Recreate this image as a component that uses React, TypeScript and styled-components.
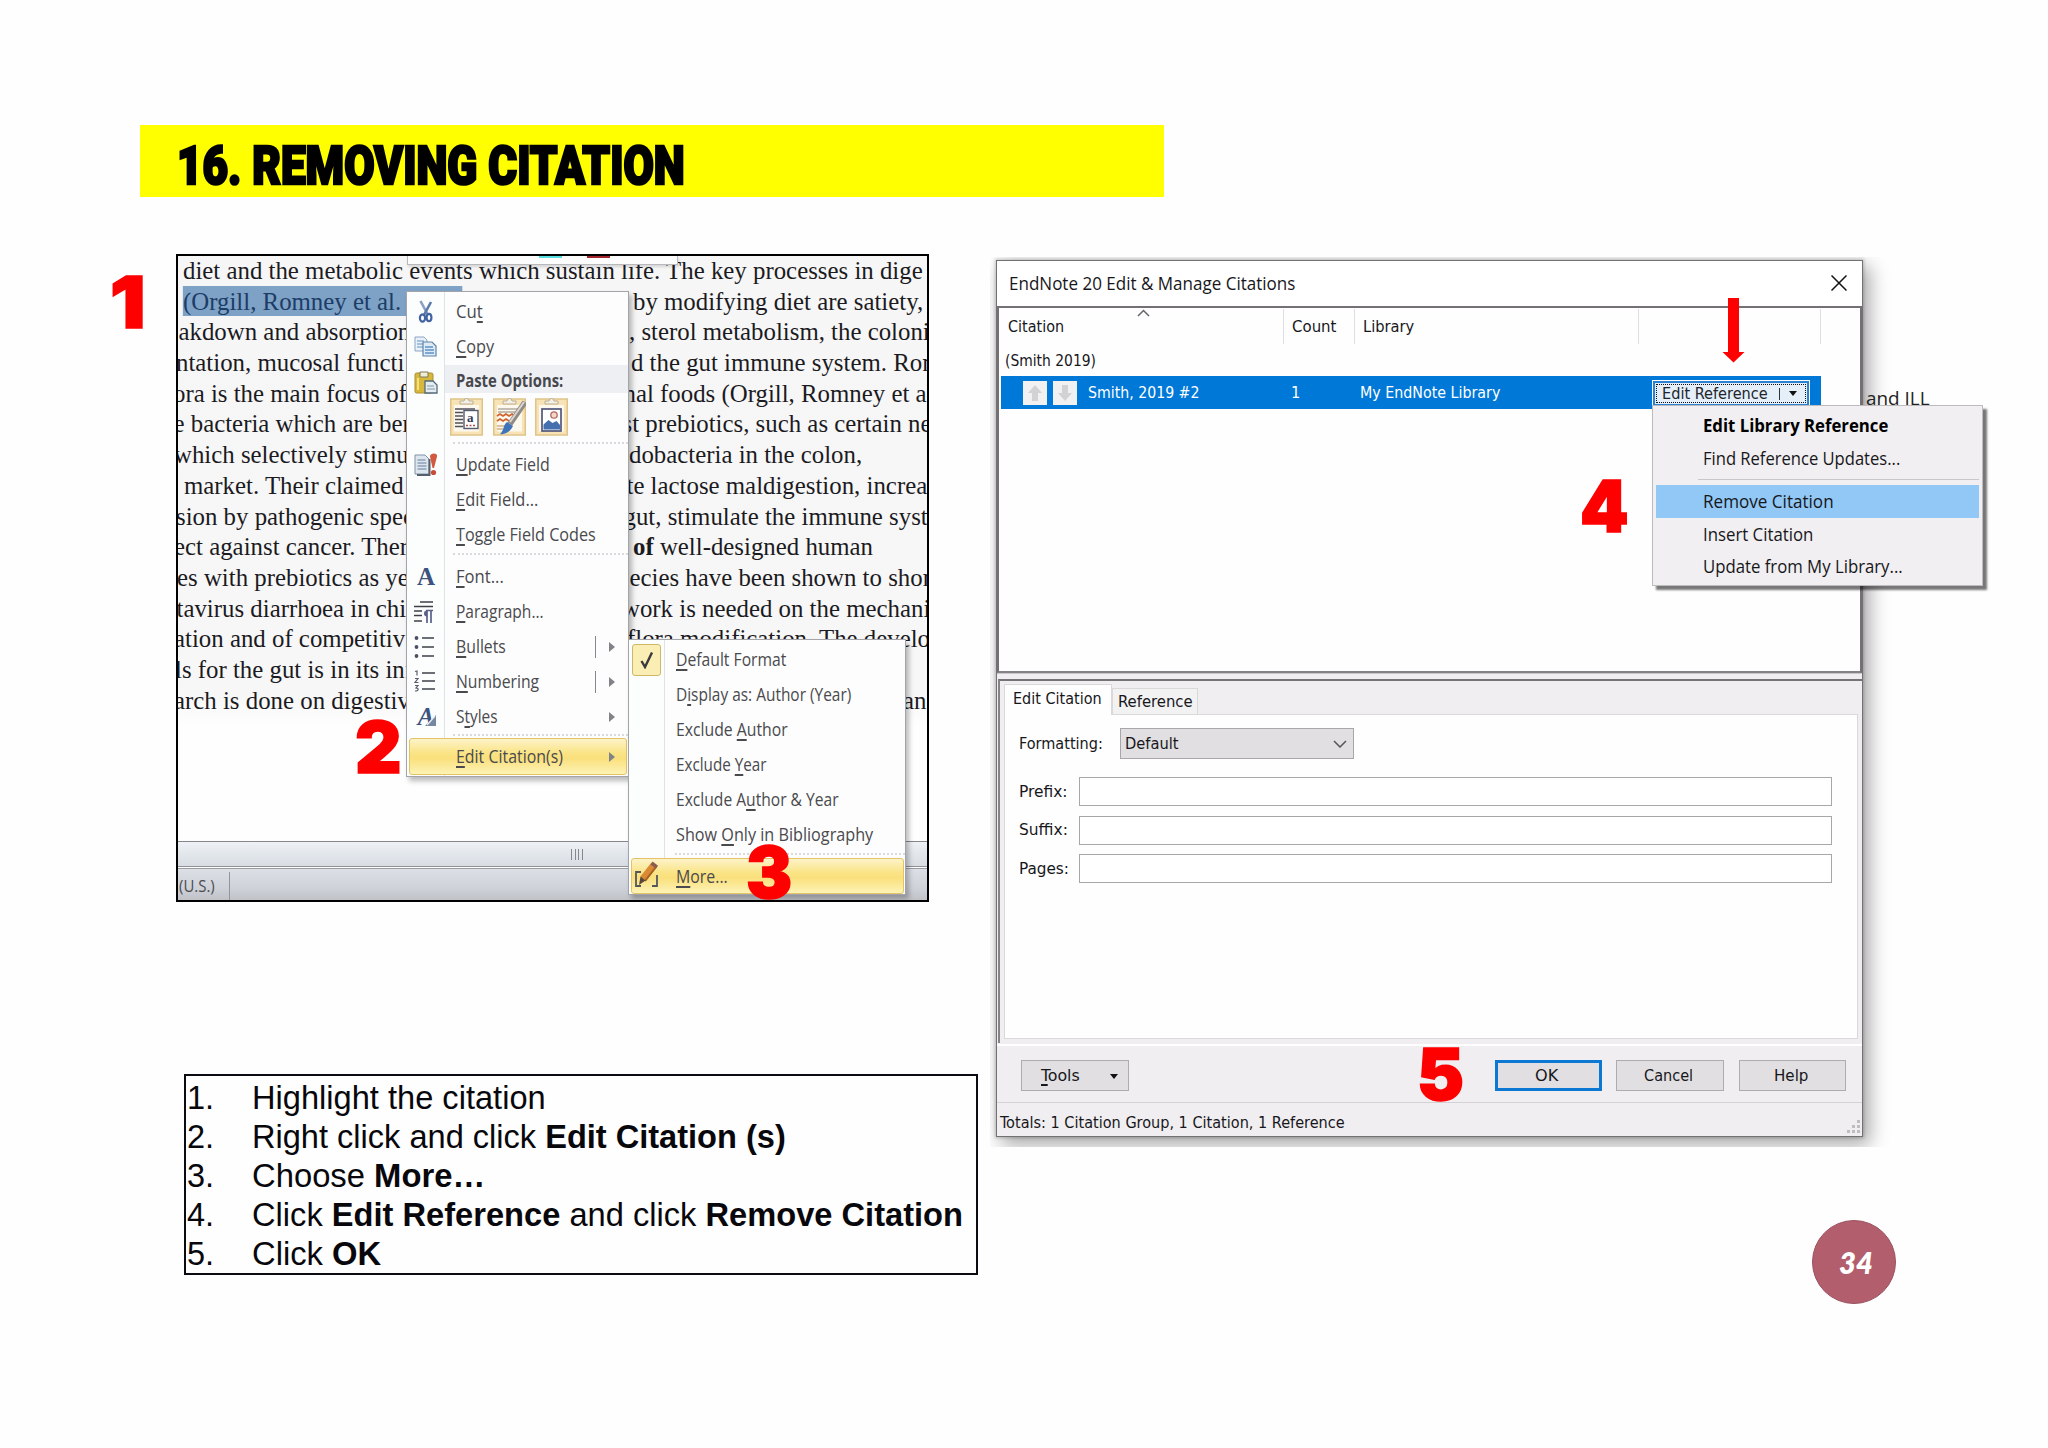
import React, { useLayoutEffect, useRef, useState } from "react";
import styled, { createGlobalStyle, css } from "styled-components";

const GlobalStyle = createGlobalStyle`
  *, *::before, *::after { box-sizing: border-box; }
  body { margin: 0; background: #fff; }
`;

const segoe = `"Open Sans", "Noto Sans", sans-serif`;
const tahoma = `"DejaVu Sans Condensed", "DejaVu Sans", sans-serif`;
const arial = `"Liberation Sans", Arial, sans-serif`;

/* ---------- text fitted to a fixed width ---------- */

const FitBox = styled.span<{ $w: number }>`
  display: inline-block;
  flex: none;
  width: ${(p) => p.$w}px;
  margin: 0 -1px;
  white-space: pre;
  text-align: left;
`;
const FitInner = styled.span`
  display: inline-block;
  transform-origin: 0 50%;
  u { text-decoration-thickness: 1.5px; text-underline-offset: 3px; text-decoration-skip-ink: none; }
`;

function Fit({ w, children }: { w: number; children: React.ReactNode }) {
  const ref = useRef<HTMLSpanElement>(null);
  const [scale, setScale] = useState(1);
  useLayoutEffect(() => {
    if (ref.current) setScale((w + 2) / ref.current.offsetWidth);
  }, [w]);
  return (
    <FitBox $w={w + 2}>
      <FitInner ref={ref} style={{ transform: `scaleX(${scale})` }}>{children}</FitInner>
    </FitBox>
  );
}

/* "~" marks the access key of a label */
function keyed(label: string) {
  const i = label.indexOf("~");
  if (i < 0) return label;
  return <>{label.slice(0, i)}<u>{label[i + 1]}</u>{label.slice(i + 2)}</>;
}

/* ---------- slide ---------- */

const Slide = styled.main`
  width: 2048px;
  height: 1448px;
  padding-top: 125px;
  overflow: hidden;
  background: #fefefe;
`;
const Banner = styled.h1`
  margin: 0 0 0 140px;
  width: 1024px;
  height: 72px;
  padding: 5px 0 0 38px;
  background: #ff0;
  color: #000;
  font: 900 53px/72px Roboto, sans-serif;
  -webkit-text-stroke: 2.6px #000;
`;
const Columns = styled.div`
  display: flex;
  gap: 12px;
  padding-left: 176px;
`;
const LeftColumn = styled.div`
  width: 802px;
  padding-top: 57px;
`;
const RightColumn = styled.div`
  padding-top: 60px;
`;
const Figure = styled.div`
  position: relative;
`;
const Marker = styled.span<{ $x: number; $y: number }>`
  position: absolute;
  z-index: 5;
  left: ${(p) => p.$x}px;
  top: ${(p) => p.$y}px;
  height: 54px;
  color: #f00;
  font: 900 72px/54px Inter, "DejaVu Sans", sans-serif;
  -webkit-text-stroke: 1.6px #f00;
`;

/* ---------- word processor capture ---------- */

const WordShot = styled.div`
  position: relative;
  display: flex;
  flex-direction: column;
  width: 753px;
  height: 648px;
  border: 2px solid #000;
  overflow: hidden;
  background: #fdfdfd;
`;
const Paper = styled.div`
  flex: 1;
  background: linear-gradient(#f7f6f6 0, #f8f7f7 440px, #fefefe 470px);
  overflow: hidden;
`;
const stretch = 0.967;
const Lines = styled.div`
  width: ${749 / stretch}px;
  transform: scaleX(${stretch});
  transform-origin: 0 0;
  color: #1b1b1f;
  font: 25.7px/30.7px "Liberation Serif", "Times New Roman", serif;
`;
const Line = styled.div`
  display: grid;
  grid-template-columns: ${440 / stretch}px 1fr;
  height: 30.7px;
  white-space: pre;
`;
const Segment = styled.span<{ $shift: number }>`
  margin-left: ${(p) => p.$shift / stretch}px;
`;
const Selection = styled.span`
  display: inline-block;
  width: ${279.5 / stretch}px;
  height: 30.7px;
  margin-top: -1px;
  padding-top: 1px;
  background: #7da2c6;
  color: #1d3c66;
`;
const MiniToolbar = styled.div`
  position: absolute;
  left: 229px;
  top: 0;
  width: 271px;
  height: 9px;
  display: flex;
  gap: 25px;
  padding-left: 131px;
  border: 1px solid #b9b9bd;
  border-top: 0;
  background: #fcfcfc;
  box-shadow: 1px 2px 3px #0002;
`;
const Swatch = styled.i<{ $c: string }>`
  width: 23px;
  height: 2px;
  background: ${(p) => p.$c};
`;
const ScrollTrack = styled.div`
  height: 26px;
  padding: 7px 0 0 393px;
  display: flex;
  gap: 2px;
  border-top: 1px solid #85878c;
  border-bottom: 1px solid #8f9197;
  background: linear-gradient(#eef1f5, #e0e5ea 60%, #d9dde3);
`;
const Grip = styled.i`
  width: 1px;
  height: 11px;
  margin-right: 0.5px;
  background: #85888e;
`;
const StatusBar = styled.div`
  height: 32px;
  margin-top: 1px;
  border-top: 1px solid #9b9da3;
  background: linear-gradient(#dcdfe5, #cfd2d9 60%, #c0c2c8);
  color: #4c4c50;
  font: 17px/33px ${segoe};
`;
const StatusCell = styled.div`
  width: 52px;
  height: 28px;
  margin-top: 3px;
  line-height: 28px;
  padding-left: 2px;
  border-right: 1px solid #93959a;
`;

/* ---------- Office style menus ---------- */

const Menu = styled.div<{ $x: number; $y: number; $w: number; $h: number; $gutter: number }>`
  position: absolute;
  left: ${(p) => p.$x}px;
  top: ${(p) => p.$y}px;
  width: ${(p) => p.$w}px;
  height: ${(p) => p.$h}px;
  display: flex;
  flex-direction: column;
  padding-top: 2px;
  border: 1px solid #a2a4aa;
  background: linear-gradient(90deg, #fcfdfd ${(p) => p.$gutter}px, #dfe2e6 ${(p) => p.$gutter}px, #dfe2e6 ${(p) => p.$gutter + 1}px, #fdfdfd ${(p) => p.$gutter + 1}px);
  box-shadow: 3px 4px 5px #0004;
  color: #4a4a4e;
  font: 18px/35px ${segoe};
`;
const Item = styled.div<{ $gutter: number; $h?: number; $hot?: boolean }>`
  display: grid;
  grid-template-columns: ${(p) => p.$gutter + 13}px 1fr auto;
  align-items: center;
  height: ${(p) => p.$h ?? 35}px;
  line-height: ${(p) => p.$h ?? 35}px;
  flex: none;
  ${(p) =>
    p.$hot &&
    css`
      margin: 0 1px 0 2px;
      border: 1px solid #e3c365;
      border-radius: 3px;
      grid-template-columns: ${p.$gutter + 10}px 1fr auto;
      background: linear-gradient(#fdf3c8, #fae486 40%, #fae07c 55%, #fdf3b6);
      line-height: ${(p.$h ?? 35) - 2}px;
    `}
`;
const IconCell = styled.span<{ $pad?: number }>`
  display: flex;
  justify-content: flex-start;
  padding-left: ${(p) => p.$pad ?? 7}px;
  svg { display: block; overflow: visible; }
`;
const MenuHeading = styled.div`
  margin: 1px 0 0 38px;
  height: 28px;
  padding-left: 12px;
  background: #eeeff3;
  font-weight: 700;
  line-height: 30px;
  color: #47484d;
`;
const HeadingRow = styled.div`
  position: relative;
  svg { position: absolute; left: 7px; top: 6px; }
`;
const PasteRow = styled.div`
  display: flex;
  gap: 9.5px;
  height: 49px;
  padding: 4px 0 0 43px;
`;
const Rule = styled.div<{ $left: number; $top: number; $h: number }>`
  height: ${(p) => p.$h}px;
  padding: ${(p) => p.$top}px 0 0 ${(p) => p.$left}px;
  &::before { content: ""; display: block; border-top: 2px dotted #d9dadd; }
`;
const Trail = styled.span<{ $split?: boolean; $pad?: number }>`
  display: flex;
  align-items: center;
  justify-content: flex-end;
  width: 33px;
  height: 22px;
  padding-right: ${(p) => p.$pad ?? 13}px;
  border-left: ${(p) => (p.$split ? "1.5px solid #85878d" : "0")};
`;
const Arrow = () => (
  <svg width="6" height="10" viewBox="0 0 6 10"><path d="M0 0 6 5 0 10z" fill="#828388" /></svg>
);
const CheckTile = styled.span`
  display: flex;
  align-items: center;
  justify-content: center;
  width: 29px;
  height: 32px;
  margin-left: 3px;
  border: 1.5px solid #cfb768;
  border-radius: 3px;
  background: #fbeeb4;
`;

/* ---------- menu icons ---------- */

const CutIcon = () => (
  <svg width="24" height="24" viewBox="0 0 24 24" fill="none">
    <path d="M6.500 1 14 15" stroke="#8ba0bf" strokeWidth="2.600" />
    <path d="M17 2 10 15" stroke="#5b7bac" strokeWidth="2.600" />
    <ellipse cx="8.500" cy="18" rx="2.600" ry="3.600" stroke="#43659f" strokeWidth="2.200" />
    <ellipse cx="15" cy="17.500" rx="2.400" ry="3.600" stroke="#43659f" strokeWidth="2.200" />
  </svg>
);
const CopyIcon = () => (
  <svg width="24" height="24" viewBox="0 0 24 24">
    <path d="M1 2h9l3 3v11H1z" fill="#e8f0f8" stroke="#8ba6c2" />
    <path d="M3 6h7M3 9h8M3 12h8" stroke="#8fb2d2" strokeWidth="1.400" />
    <path d="M9 7h9l4 4v10H9z" fill="#dfeaf5" stroke="#5f83a8" strokeWidth="1.200" />
    <path d="M11 12h8M11 15h9M11 18h9" stroke="#5e93c6" strokeWidth="1.500" />
  </svg>
);
const PasteIcon = () => (
  <svg width="25" height="25" viewBox="0 0 25 25">
    <rect x="1" y="3" width="18" height="20" rx="1.500" fill="#d8b83c" stroke="#a98d32" />
    <path d="M6 2h8v5H6z" fill="#f1edd2" stroke="#7d7b58" />
    <path d="M4 8v12" stroke="#f3e27a" strokeWidth="2" />
    <path d="M11 11h8l4 4v8H11z" fill="#e6edf2" stroke="#536b78" strokeWidth="1.300" />
    <path d="M13 16h7M13 19h8" stroke="#7e98a8" />
  </svg>
);
const UpdateIcon = () => (
  <svg width="25" height="24" viewBox="0 0 25 24">
    <path d="M1 2h10l4 4v15H1z" fill="#dde6ee" stroke="#8293a5" />
    <path d="M15.500 6v16H3" stroke="#56616d" strokeWidth="2" fill="none" />
    <path d="M3.500 7h8M3.500 10h9M3.500 13h9M3.500 16h9" stroke="#8aa0b4" strokeWidth="1.300" />
    <path d="M16 3.500c0-4 8-4 7 0l-3 11.500h-1.500z" fill="#d2583f" />
    <circle cx="19.500" cy="19.500" r="2.600" fill="#c84c39" />
  </svg>
);
const LetterGlyph = styled.span<{ $italic?: boolean }>`
  width: 24px;
  text-align: center;
  color: #3c5380;
  font: 700 25px/26px "Liberation Serif", serif;
  font-style: ${(p) => (p.$italic ? "italic" : "normal")};
`;
const StyleGlyph = styled.span`
  position: relative;
  display: flex;
  svg { position: absolute; left: 9px; top: 11px; }
`;
const ParagraphIcon = () => (
  <svg width="22" height="22" viewBox="0 0 22 22" fill="none" stroke="#3d4048" strokeWidth="1.700">
    <path d="M6 1h13M0 5.500h19M0 10h8M0 14.500h8M0 20h8" />
    <path d="M13 10v12M17 10v12M19 9.500h-7" stroke="#59608a" />
    <path d="M13 9.500a3 3 0 0 0 0 6z" fill="#59608a" stroke="none" />
  </svg>
);
const BulletsIcon = () => (
  <svg width="22" height="22" viewBox="0 0 22 22">
    <path d="M8 2h12M8 11h12M8 20h12" stroke="#3d4048" strokeWidth="1.600" />
    <g fill="#4a4f63"><circle cx="2.500" cy="2" r="1.900" /><circle cx="2.500" cy="11" r="1.900" /><circle cx="2.500" cy="20" r="1.900" /></g>
  </svg>
);
const NumberingIcon = () => (
  <svg width="22" height="22" viewBox="0 0 22 22" fill="none" stroke="#3d4048" strokeWidth="1.600">
    <path d="M8 2h13M8 10h13M8 18h13" />
    <path d="M1 0.500 3 0v4.500M1 7.500h3l-3 4h3.500M1 14.500h3l-2 2.500c3 0 3 3-1 3" strokeWidth="1.200" stroke="#5a5f70" />
  </svg>
);
const Board = ({ kind }: { kind: "text" | "merge" | "picture" }) => (
  <svg width="33" height="39" viewBox="0 0 33 39">
    <rect x="0.750" y="2" width="31.500" height="36" fill="#f7e3b6" stroke="#dfc389" strokeWidth="1.500" />
    <rect x="4" y="8" width="25" height="26.500" fill="#fcf8ee" />
    <path d="M10 7V4h4a2.500 2.500 0 0 1 5 0h4v3z" fill="#f2efe6" stroke="#bcae8e" />
    {kind === "text" && (
      <>
        <path d="M5 12h20M5 15.500h8M5 19h8M5 22.500h8M5 26h8M5 29.500h8" stroke="#51525c" strokeWidth="1.300" />
        <rect x="14" y="13.500" width="14" height="18" fill="#fff" stroke="#565a70" strokeWidth="1.400" />
        <text x="17" y="25" fontFamily="Liberation Serif" fontWeight="700" fontSize="13" fill="#333a56">a</text>
        <path d="M16 28.500h10" stroke="#a65352" strokeDasharray="2 1.500" strokeWidth="1.500" />
      </>
    )}
    {kind === "merge" && (
      <>
        <path d="M5 12h20M5 15h18" stroke="#8a8177" strokeWidth="1.200" />
        <path d="m4 19 3-2 3 2 3-2 3 2 3-2 3 2M4 24l3-2 3 2 3-2 3 2" stroke="#d0622c" strokeWidth="1.800" fill="none" />
        <path d="M4 29h10M4 32h6" stroke="#b98c5c" strokeWidth="1.200" />
        <path d="M32 5 17 27" stroke="#8f8a86" strokeWidth="5.500" />
        <path d="M31 5 17 25" stroke="#d9d6d2" strokeWidth="2" />
        <path d="m14 25 6 4c-3 6-8 9-13 8 4-3 3-9 7-12z" fill="#3f74b8" />
      </>
    )}
    {kind === "picture" && (
      <>
        <rect x="7" y="12" width="19" height="22" fill="#fff" stroke="#51577a" strokeWidth="1.700" />
        <path d="m8.500 32.500 0-5 5-4.500 4 3 4-2 3.500 4v4.500z" fill="#456fae" />
        <circle cx="19" cy="18" r="3.200" fill="#f6d6c8" stroke="#b06a62" strokeWidth="1.300" />
      </>
    )}
  </svg>
);
const PencilIcon = () => (
  <svg width="27" height="28" viewBox="0 0 27 28" fill="none">
    <path d="M7 10H2v14h5M18 24h5V13" stroke="#54585c" strokeWidth="1.800" />
    <path d="M20 3 9 17" stroke="#d98a34" strokeWidth="7" />
    <path d="m22 5-11 14" stroke="#a85f22" strokeWidth="2" />
    <path d="m17.500 1 5.500 4.200" stroke="#8d5a52" strokeWidth="3.500" />
    <path d="m6.500 14.500 5 4L5 23z" fill="#55473b" />
  </svg>
);
const CheckIcon = () => (
  <svg width="14" height="18" viewBox="0 0 14 18"><path d="m1.500 10 3.500 6L12 1.500" fill="none" stroke="#3b3a3c" strokeWidth="2.400" /></svg>
);

/* ---------- instructions ---------- */

const Steps = styled.ol`
  list-style: none;
  margin: 172px 0 0 8px;
  width: 794px;
  height: 201px;
  padding: 3px 0 0 1px;
  border: 2px solid #0b0b12;
  color: #08080c;
  font: 32.5px/39px ${arial};
`;
const Step = styled.li`
  display: grid;
  grid-template-columns: 65.5px 1fr;
  height: 39px;
`;

/* ---------- EndNote dialog ---------- */

const Capture = styled.div`
  position: relative;
  width: 1010px;
  height: 890px;
  padding: 3px 0 0 6px;
  overflow: hidden;
`;
const Dialog = styled.section`
  display: flex;
  flex-direction: column;
  width: 867px;
  height: 877px;
  border: 1px solid #737174;
  background: #f0eef0;
  box-shadow: 6px 7px 18px 1px #0005, 0 0 3px 1px #0003;
  color: #17171b;
  font: 16.3px/20px ${tahoma};
`;
const TitleBar = styled.header`
  display: flex;
  align-items: center;
  justify-content: space-between;
  height: 45px;
  padding: 0 15px 1px 13px;
  background: #fff;
  font: 17.5px/44px ${segoe};
`;
const List = styled.div`
  height: 367px;
  border: 2px solid #737174;
  border-bottom-color: #848286;
  background: #fefefe;
`;
const HeadRow = styled.div`
  display: grid;
  grid-template-columns: 285px 71px 284px 182px;
  height: 37px;
  padding-top: 1px;
`;
const HeadCell = styled.div<{ $pad: number }>`
  position: relative;
  height: 35px;
  padding-left: ${(p) => p.$pad}px;
  line-height: 35px;
  border-right: 1.5px solid #dedde0;
  svg { position: absolute; left: 138px; top: 0; }
`;
const GroupRow = styled.div`
  height: 31px;
  padding-left: 7px;
  line-height: 32px;
`;
const SelectedRow = styled.div`
  display: grid;
  grid-template-columns: 88px 203px 69px 291px 158px;
  align-items: center;
  width: 820px;
  height: 33px;
  margin-left: 2px;
  background: #0078d7;
  color: #fff;
  line-height: 34px;
`;
const MoveButtons = styled.div`
  display: flex;
  gap: 6px;
  padding-left: 22px;
`;
const MoveButton = styled.button`
  width: 24px;
  height: 24px;
  padding: 0;
  border: 0;
  background: #f1f1f2;
  svg { display: block; margin: auto; }
`;
const EditButton = styled.button`
  width: 158px;
  height: 27px;
  margin-top: 1px;
  padding: 2px;
  border: 1px solid #fff;
  outline: 0;
  background: #e4effa;
  box-shadow: inset 0 0 0 2px #2a82d2;
  font: inherit;
  color: #22242a;
`;
const FocusRect = styled.span`
  display: flex;
  align-items: center;
  width: 150px;
  height: 19px;
  margin: 1px;
  padding-left: 6px;
  border: 1.5px dotted #111;
  line-height: 18px;
`;
const Divider = styled.i`
  width: 1px;
  height: 12px;
  margin: 0 9px 0 12px;
  background: #333;
`;
const Splitter = styled.div`
  height: 6px;
  border-top: 1px solid #c9c7ca;
`;
const TabPanel = styled.div`
  height: 364px;
  margin-left: 1px;
  padding: 3px 4px 0 4px;
  border-top: 2px solid #757376;
  border-left: 2px solid #858386;
`;
const Tabs = styled.div`
  display: flex;
  align-items: flex-end;
  height: 30px;
`;
const Tab = styled.div<{ $active?: boolean; $w: number }>`
  position: relative;
  width: ${(p) => p.$w}px;
  height: ${(p) => (p.$active ? 31 : 26)}px;
  margin-bottom: ${(p) => (p.$active ? -1 : 0)}px;
  padding-left: ${(p) => (p.$active ? 9 : 6)}px;
  line-height: ${(p) => (p.$active ? 27 : 26)}px;
  border: 1.5px solid #dad8db;
  border-bottom: 0;
  background: ${(p) => (p.$active ? "#fefefe" : "#f3f2f3")};
`;
const Pane = styled.div`
  height: 325px;
  padding: 13px 0 0 15px;
  border: 1.5px solid #dad8db;
  background: #fefefe;
`;
const Field = styled.div<{ $label: number; $gap: number }>`
  display: grid;
  grid-template-columns: ${(p) => p.$label}px auto;
  align-items: center;
  justify-content: start;
  margin-bottom: ${(p) => p.$gap}px;
`;
const Select = styled.div`
  display: flex;
  align-items: center;
  justify-content: space-between;
  width: 234px;
  height: 31px;
  padding: 1px 6px 0 5px;
  border: 1.5px solid #a8a6a9;
  background: #e1dfe1;
`;
const Input = styled.div`
  width: 753px;
  height: 29px;
  border: 1.5px solid #a8a6a9;
  background: #fff;
`;
const Footer = styled.footer`
  display: flex;
  height: 59px;
  margin-top: 1px;
  padding: 14px 0 0 24px;
  border-top: 2px solid #fff;
  border-bottom: 1px solid #d4d2d5;
`;
const Button = styled.button<{ $primary?: boolean; $ml?: number }>`
  display: flex;
  align-items: center;
  justify-content: center;
  width: 107.5px;
  height: 31px;
  margin: 0 0 0 ${(p) => p.$ml ?? 0}px;
  padding: 1px 3px 0 0;
  border: ${(p) => (p.$primary ? "3px solid #0c78d2" : "1.5px solid #aeacaf")};
  background: #e1dfe1;
  color: inherit;
  font: inherit;
`;
const SplitButton = styled(Button)`
  justify-content: space-between;
  padding: 1px 10px 0 20px;
`;
const Totals = styled.div`
  display: flex;
  flex: 1;
  justify-content: space-between;
  padding: 7px 1px 0 4px;
  line-height: 26px;
`;
const GripCorner = styled.svg`
  margin-top: 10px;
`;
const Behind = styled.span`
  position: absolute;
  left: 877px;
  top: 128px;
  color: #222;
  font: 18px/26px ${segoe};
`;
const PopupMenu = styled.div`
  position: absolute;
  left: 662px;
  top: 148px;
  width: 331px;
  height: 181px;
  padding: 3px 3px 0 3px;
  border: 1.5px solid #bdbbbe;
  background: #f1eff1;
  box-shadow: 4px 4px 2px #0008;
  color: #17171b;
  font: 18px/32px ${segoe};
`;
const PopupItem = styled.div<{ $hot?: boolean; $bold?: boolean }>`
  height: 32.5px;
  padding-left: 48px;
  background: ${(p) => (p.$hot ? "#91c8f5" : "transparent")};
  font-weight: ${(p) => (p.$bold ? 700 : 400)};
  color: ${(p) => (p.$bold ? "#000" : "inherit")};
`;
const PopupRule = styled.div`
  height: 11px;
  margin-left: 42px;
  padding-top: 5px;
  &::before { content: ""; display: block; border-top: 1px solid #c9c7ca; }
`;
const ArrowPointer = styled.svg`
  position: absolute;
  left: 732px;
  top: 41px;
`;
const Caret = () => (
  <svg width="8" height="5" viewBox="0 0 8 5"><path d="M0 0h8L4 5z" fill="#111" /></svg>
);
const PageBadge = styled.div`
  display: flex;
  align-items: center;
  justify-content: center;
  width: 84px;
  height: 84px;
  margin: 73px 0 0 822px;
  padding-left: 4px;
  border-radius: 50%;
  border: 1px solid #9b5260;
  background: #b35e6c;
  color: #fff;
  font: italic 800 30px/84px Lato, sans-serif;
`;

/* ---------- content ---------- */

type TextLine = { l?: string; lx?: number; r?: React.ReactNode; rx?: number };
const text: TextLine[] = [
  { l: "diet and the metabolic events which sustain life. The key processes in dige", lx: 5 },
  { r: "by modifying diet are satiety,", rx: 633 },
  { l: "akdown and absorption", lx: 0.5, r: ", sterol metabolism, the coloni", rx: 629 },
  { l: "ntation, mucosal functi", lx: -2, r: "d the gut immune system. Rom", rx: 631 },
  { l: "ora is the main focus of", lx: -5, r: "nal foods (Orgill, Romney et al", rx: 623.5 },
  { l: "e bacteria which are ben", lx: -4.5, r: "st prebiotics, such as certain ne", rx: 622.5 },
  { l: "which selectively stimul", lx: -4, r: "dobacteria in the colon,", rx: 629 },
  { l: "market. Their claimed", lx: 6, r: "te lactose maldigestion, increa", rx: 626.5 },
  { l: "sion by pathogenic spec", lx: -2, r: "gut, stimulate the immune syst", rx: 623.5 },
  { l: "ect against cancer. Ther", lx: -4, r: <><b>of</b> well-designed human</>, rx: 633 },
  { l: "es with prebiotics as ye", lx: -1, r: "ecies have been shown to shor", rx: 629.5 },
  { l: "tavirus diarrhoea in chi", lx: -1.5, r: "work is needed on the mechani", rx: 622 },
  { l: "ation and of competitiv", lx: -4, r: "flora modification. The develo", rx: 627 },
  { l: "ls for the gut is in its inf", lx: -3 },
  { l: "arch is done on digestiv", lx: -4, r: "an", rx: 903 },
];

type Entry = { label: string; w: number; icon?: React.ReactNode; trail?: "arrow" | "split" };
const clipboardItems: Entry[] = [
  { label: "Cu~t", w: 25, icon: <CutIcon /> },
  { label: "~Copy", w: 36, icon: <CopyIcon /> },
];
const fieldItems: Entry[] = [
  { label: "~Update Field", w: 92, icon: <UpdateIcon /> },
  { label: "~Edit Field...", w: 80 },
  { label: "~Toggle Field Codes", w: 138 },
];
const formatItems: Entry[] = [
  { label: "~Font...", w: 46, icon: <LetterGlyph>A</LetterGlyph> },
  { label: "~Paragraph...", w: 86, icon: <ParagraphIcon /> },
  { label: "~Bullets", w: 48, icon: <BulletsIcon />, trail: "split" },
  { label: "~Numbering", w: 81, icon: <NumberingIcon />, trail: "split" },
  {
    label: "S~tyles", w: 40, trail: "arrow",
    icon: (
      <StyleGlyph>
        <LetterGlyph $italic>A</LetterGlyph>
        <svg width="14" height="12" viewBox="0 0 14 12"><path d="M13 0v11H2z" fill="#75889f" /><path d="m12 1-8 9" stroke="#e4ebf2" strokeWidth="1.500" /></svg>
      </StyleGlyph>
    ),
  },
];
const citationItems: Entry[] = [
  { label: "~Default Format", w: 108, icon: "check" },
  { label: "D~isplay as: Author (Year)", w: 173 },
  { label: "Exclude ~Author", w: 110 },
  { label: "Exclude ~Year", w: 88.5 },
  { label: "Exclude A~uthor & Year", w: 161 },
  { label: "Show ~Only in Bibliography", w: 195 },
];

function MenuItem({ e, gutter }: { e: Entry; gutter: number }) {
  return (
    <Item $gutter={gutter}>
      {e.icon === "check" ? <CheckTile><CheckIcon /></CheckTile> : <IconCell>{e.icon}</IconCell>}
      <Fit w={e.w}>{keyed(e.label)}</Fit>
      {e.trail ? <Trail $split={e.trail === "split"}><Arrow /></Trail> : <span />}
    </Item>
  );
}

function WordFigure() {
  return (
    <Figure>
      <WordShot>
        <Paper>
          <Lines>
            {text.map((t, i) => (
              <Line key={i}>
                {i === 1 ? (
                  <Segment $shift={5}><Selection>(Orgill, Romney et al. 2004)</Selection></Segment>
                ) : (
                  <Segment $shift={t.lx ?? 0}>{t.l}</Segment>
                )}
                {t.r && <Segment $shift={(t.rx ?? 0) - 178 - 440}>{t.r}</Segment>}
              </Line>
            ))}
          </Lines>
        </Paper>
        <ScrollTrack><Grip /><Grip /><Grip /><Grip /></ScrollTrack>
        <StatusBar><StatusCell><Fit w={34}>(U.S.)</Fit></StatusCell></StatusBar>
        <MiniToolbar><Swatch $c="#58dfe0" /><Swatch $c="#a3242b" /></MiniToolbar>

        <Menu $x={228} $y={35} $w={223} $h={486} $gutter={37}>
          {clipboardItems.map((e) => <MenuItem key={e.label} e={e} gutter={37} />)}
          <HeadingRow>
            <PasteIcon />
            <MenuHeading><Fit w={105}>Paste Options:</Fit></MenuHeading>
          </HeadingRow>
          <PasteRow>
            <Board kind="text" /><Board kind="merge" /><Board kind="picture" />
          </PasteRow>
          <Rule $left={46} $top={0} $h={5} />
          {fieldItems.map((e) => <MenuItem key={e.label} e={e} gutter={37} />)}
          <Rule $left={46} $top={1} $h={7} />
          {formatItems.map((e) => <MenuItem key={e.label} e={e} gutter={37} />)}
          <Rule $left={46} $top={0} $h={4} />
          <Item $gutter={37} $h={37} $hot>
            <span />
            <Fit w={105}>{keyed("~Edit Citation(s)")}</Fit>
            <Trail $pad={11}><Arrow /></Trail>
          </Item>
        </Menu>

        <Menu $x={450} $y={383} $w={278} $h={256} $gutter={35}>
          {citationItems.map((e) => <MenuItem key={e.label} e={e} gutter={35} />)}
          <Rule $left={46} $top={1} $h={6} />
          <Item $gutter={35} $h={36} $hot>
            <IconCell $pad={2}><PencilIcon /></IconCell>
            <Fit w={50}>{keyed("~More...")}</Fit>
          </Item>
        </Menu>
      </WordShot>
      <Marker $x={-65} $y={21}><Fit w={34}>1</Fit></Marker>
      <Marker $x={180} $y={466}><Fit w={45}>2</Fit></Marker>
      <Marker $x={571} $y={591}><Fit w={44}>3</Fit></Marker>
    </Figure>
  );
}

function EndNoteFigure() {
  return (
    <Capture>
      <Behind><Fit w={62}>and ILL</Fit></Behind>
      <Dialog>
        <TitleBar>
          <Fit w={284}>EndNote 20 Edit & Manage Citations</Fit>
          <svg width="16" height="16" viewBox="0 0 16 16"><path d="m.5.5 15 15m0-15-15 15" stroke="#111" strokeWidth="1.500" /></svg>
        </TitleBar>
        <List>
          <HeadRow>
            <HeadCell $pad={10}>
              <Fit w={54}>Citation</Fit>
              <svg width="13" height="8" viewBox="0 0 13 8"><path d="m1 7 5.500-5.500L12 7" fill="none" stroke="#66656a" strokeWidth="1.500" /></svg>
            </HeadCell>
            <HeadCell $pad={9}><Fit w={43}>Count</Fit></HeadCell>
            <HeadCell $pad={9}><Fit w={49}>Library</Fit></HeadCell>
            <HeadCell $pad={0} />
          </HeadRow>
          <GroupRow><Fit w={89}>(Smith 2019)</Fit></GroupRow>
          <SelectedRow>
            <MoveButtons>
              <MoveButton><svg width="16" height="16" viewBox="0 0 16 16"><path d="M8 0 15 8h-4v8H5V8H1z" fill="#d2d2d4" /></svg></MoveButton>
              <MoveButton><svg width="16" height="16" viewBox="0 0 16 16"><path d="M8 16 15 8h-4V0H5v8H1z" fill="#d2d2d4" /></svg></MoveButton>
            </MoveButtons>
            <Fit w={109}>Smith, 2019 #2</Fit>
            <Fit w={7}>1</Fit>
            <Fit w={138}>My EndNote Library</Fit>
            <EditButton>
              <FocusRect><Fit w={104}>Edit Reference</Fit><Divider /><Caret /></FocusRect>
            </EditButton>
          </SelectedRow>
        </List>
        <Splitter />
        <TabPanel>
          <Tabs>
            <Tab $active $w={108}><Fit w={86.5}>Edit Citation</Fit></Tab>
            <Tab $w={86}><Fit w={73}>Reference</Fit></Tab>
          </Tabs>
          <Pane>
            <Field $label={100} $gap={18}>
              <Fit w={82}>Formatting:</Fit>
              <Select>
                <Fit w={52}>Default</Fit>
                <svg width="14" height="8" viewBox="0 0 14 8"><path d="m1 1 6 6 6-6" fill="none" stroke="#555458" strokeWidth="1.500" /></svg>
              </Select>
            </Field>
            <Field $label={59} $gap={9.5}><Fit w={46.5}>Prefix:</Fit><Input /></Field>
            <Field $label={59} $gap={9.5}><Fit w={46.5}>Suffix:</Fit><Input /></Field>
            <Field $label={59} $gap={0}><Fit w={48}>Pages:</Fit><Input /></Field>
          </Pane>
        </TabPanel>
        <Footer>
          <SplitButton><Fit w={37}>{keyed("~Tools")}</Fit><Caret /></SplitButton>
          <Button $primary $ml={366}><Fit w={21}>OK</Fit></Button>
          <Button $ml={14}><Fit w={47.5}>Cancel</Fit></Button>
          <Button $ml={15}><Fit w={32}>Help</Fit></Button>
        </Footer>
        <Totals>
          <Fit w={343}>Totals: 1 Citation Group, 1 Citation, 1 Reference</Fit>
          <GripCorner width="14" height="14" viewBox="0 0 14 14">
            <path d="M10 0h3v3h-3zM5 5h3v3H5zM10 5h3v3h-3zM0 10h3v3H0zM5 10h3v3H5zM10 10h3v3h-3z" fill="#bfbdc0" />
          </GripCorner>
        </Totals>
      </Dialog>
      <PopupMenu>
        <PopupItem $bold><Fit w={183}>Edit Library Reference</Fit></PopupItem>
        <PopupItem><Fit w={195}>Find Reference Updates...</Fit></PopupItem>
        <PopupRule />
        <PopupItem $hot><Fit w={129}>Remove Citation</Fit></PopupItem>
        <PopupItem><Fit w={108}>Insert Citation</Fit></PopupItem>
        <PopupItem><Fit w={198}>Update from My Library...</Fit></PopupItem>
      </PopupMenu>
      <ArrowPointer width="24" height="65" viewBox="0 0 24 65">
        <path d="M6 0h11v54h5.500L11.500 64.500 0.500 54H6z" fill="#f00" />
      </ArrowPointer>
      <Marker $x={591} $y={222}><Fit w={47}>4</Fit></Marker>
      <Marker $x={428} $y={790}><Fit w={45}>5</Fit></Marker>
    </Capture>
  );
}

export default function App() {
  return (
    <>
      <GlobalStyle />
      <Slide>
        <Banner><Fit w={506}>16. REMOVING CITATION</Fit></Banner>
        <Columns>
          <LeftColumn>
            <WordFigure />
            <Steps>
              <Step><span>1.</span><Fit w={292}>Highlight the citation</Fit></Step>
              <Step><span>2.</span><Fit w={532}>Right click and click <b>Edit Citation (s)</b></Fit></Step>
              <Step><span>3.</span><Fit w={231}>Choose <b>More…</b></Fit></Step>
              <Step><span>4.</span><Fit w={709}>Click <b>Edit Reference</b> and click <b>Remove Citation</b></Fit></Step>
              <Step><span>5.</span><Fit w={127}>Click <b>OK</b></Fit></Step>
            </Steps>
          </LeftColumn>
          <RightColumn>
            <EndNoteFigure />
            <PageBadge><Fit w={32}>34</Fit></PageBadge>
          </RightColumn>
        </Columns>
      </Slide>
    </>
  );
}
